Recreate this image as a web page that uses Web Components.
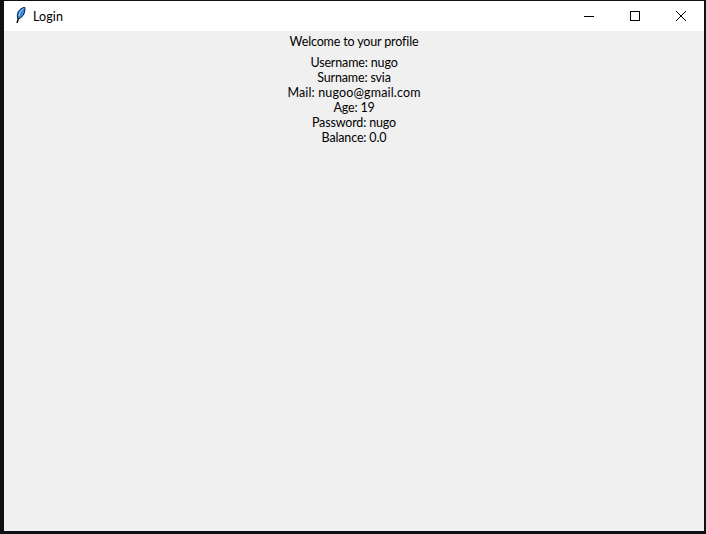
<!-- Profile window -->
<template class="app-window-template">
  <style>
    :host {
      display: flex;
      flex-direction: column;
      height: 534px;
      box-sizing: border-box;
      padding: 1px 2px 3px 4px;
      background: #0d1114;
      font: 12.5px Lato, "Noto Sans", sans-serif;
      color: #000;
    }

    .bar {
      display: flex;
      align-items: center;
      height: 30px;
      flex: none;
      background: #fff;
    }

    .icon { margin: 0 0 2px 9px; width: 16px; height: 16px; flex: none; }
    .title { margin-left: 4px; flex: 1; letter-spacing: 0.1px; }

    .control {
      width: 46px;
      height: 30px;
      flex: none;
      display: flex;
      align-items: center;
      justify-content: center;
    }

    .client { flex: 1; background: #f0f0f0; }
  </style>

  <div class="bar">
    <svg class="icon" viewBox="13 7 16 16">
      <path d="M17 23 L19 16.5" stroke="#000" stroke-width="1.4" fill="none"/>
      <path d="M18 19 C16 14 18.5 8.5 24.8 7.2 C25.6 11 24 17.2 18 19 Z" fill="#2f86e0" stroke="#0c1c34" stroke-width="1"/>
      <path d="M19 16 C19.5 13 21 10.5 23.5 8.5" stroke="#a9d0f5" stroke-width="1" fill="none"/>
    </svg>
    <span class="title">Login</span>
    <div class="control">
      <svg width="10" height="10" viewBox="0 0 10 10"><path d="M0 5.5H10" stroke="#000"/></svg>
    </div>
    <div class="control">
      <svg width="10" height="10" viewBox="0 0 10 10"><rect x=".5" y=".5" width="9" height="9" fill="none" stroke="#000"/></svg>
    </div>
    <div class="control">
      <svg width="10" height="10" viewBox="0 0 10 10"><path d="M0 0L10 10M10 0L0 10" stroke="#000"/></svg>
    </div>
  </div>
  <div class="client"><slot></slot></div>
</template>

<template class="profile-view-template">
  <style>
    :host {
      display: flex;
      flex-direction: column;
      align-items: center;
      padding-top: 3px;
      line-height: 15px;
      letter-spacing: -0.15px;
      white-space: nowrap;
    }

    h1 { font: inherit; margin: 0 0 6px; }
    div { text-align: center; }
    .wide { letter-spacing: 0.15px; }
  </style>

  <h1>Welcome to your profile</h1>
  <div class="rows"></div>
</template>

<script>
/**
 * The window frame with its title bar.
 */
class AppWindow extends HTMLElement {
  constructor() {
    super()
    this.attachShadow({ mode: 'open' })
    this.shadowRoot.appendChild(document.querySelector(".app-window-template").content.cloneNode(true))
  }
}

/**
 * The profile text, one row per field.
 */
class ProfileView extends HTMLElement {
  constructor() {
    super()
    this.attachShadow({ mode: 'open' })
    this.shadowRoot.appendChild(document.querySelector(".profile-view-template").content.cloneNode(true))

    const rows = this.shadowRoot.querySelector(".rows")
    for(let text of ProfileView.fields) {
      const row = document.createElement("div")
      row.textContent = text
      if(text.includes("@")) {
        row.className = "wide"
      }
      rows.appendChild(row)
    }
  }
}

ProfileView.fields = [
  "Username: nugo",
  "Surname: svia",
  "Mail: nugoo@gmail.com",
  "Age: 19",
  "Password: nugo",
  "Balance: 0.0"
]

customElements.define('app-window', AppWindow)
customElements.define('profile-view', ProfileView)
</script>

<style>
  body { margin: 0; }
</style>

<app-window><profile-view></profile-view></app-window>
